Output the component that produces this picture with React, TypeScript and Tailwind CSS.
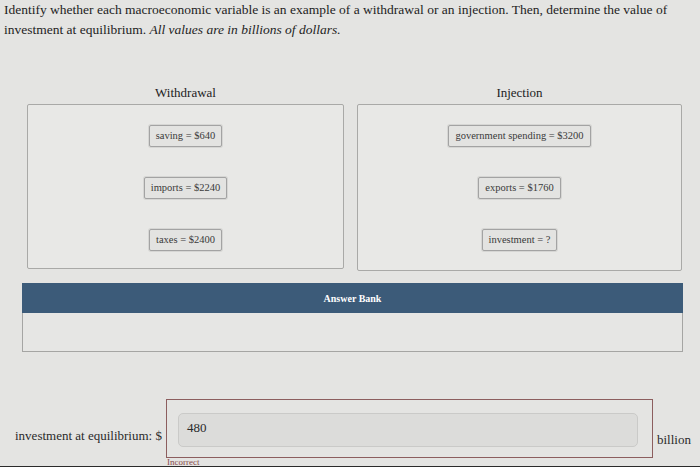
import React from "react";

const serif = { fontFamily: '"Liberation Serif", "Times New Roman", serif' };

function Chip({ children }: { children: React.ReactNode }) {
  return (
    <div className="h-[22px] px-[6px] flex items-center bg-[#e3e3e1] border border-[#a3a3a3] rounded-[2px] text-[10.5px] text-[#3a3a3a] leading-none shadow-[0_0_0_1px_#d6d6d4]">
      {children}
    </div>
  );
}

function Bucket({ title, items, heightClass }: { title: string; items: React.ReactNode[]; heightClass: string }) {
  return (
    <div className="flex flex-col items-center">
      <div className="h-[16px] text-[13px] leading-[16px] text-[#222]">{title}</div>
      <div className={`mt-[3px] w-full ${heightClass} border border-[#a9a9a7] rounded-[2px] bg-[#e8e8e6] flex flex-col items-center pt-[20px] gap-[30px]`}>
        {items.map((it, i) => (
          <Chip key={i}>{it}</Chip>
        ))}
      </div>
    </div>
  );
}

export default function App() {
  return (
    <div className="w-[700px] h-[467px] overflow-hidden bg-[#e4e4e2] relative" style={serif}>
      <div className="pl-[4px] pt-[0px] text-[13.5px] leading-[20px] text-[#1e1e1e]">
        Identify whether each macroeconomic variable is an example of a withdrawal or an injection. Then, determine the value of
        <br />
        investment at equilibrium. <i>All values are in billions of dollars.</i>
      </div>

      <div className="mt-[45px] pl-[27px] pr-[18px] grid grid-cols-[317px_325px] gap-[13px]">
        <Bucket
          title="Withdrawal"
          heightClass="h-[165px]"
          items={["saving = $640", "imports = $2240", "taxes = $2400"]}
        />
        <Bucket
          title="Injection"
          heightClass="h-[167px]"
          items={["government spending = $3200", "exports = $1760", "investment = ?"]}
        />
      </div>

      <div className="mt-[12px] ml-[22px] w-[661px]">
        <div className="h-[30px] bg-[#3c5b79] flex items-center justify-center text-white text-[10px] font-bold">
          Answer Bank
        </div>
        <div className="h-[39px] border border-t-0 border-[#a5a5a3] bg-[#e6e6e4]" />
      </div>

      <div className="mt-[47px] flex items-center">
        <div className="w-[166px] pl-[15px] text-[13px] text-[#2a2a2a] leading-none pt-[14px]">
          investment at equilibrium: $
        </div>
        <div className="w-[487px] h-[59px] border border-[#8c5e5e] pl-[11px] pt-[13px] pr-[14px] pb-[10px]">
          <div className="h-full w-full bg-[#dcdcda] border border-[#cacac8] rounded-[5px] pl-[8px] pt-[4px] text-[13px] text-[#2a2a2a]">
            480
          </div>
        </div>
        <div className="pl-[4px] pt-[22px] text-[13px] text-[#2a2a2a] leading-none">billion</div>
      </div>

      <div className="ml-[167px] mt-[0px] text-[9px] leading-[8px] text-[#8a4a4a]">Incorrect</div>
      <div className="absolute left-0 right-0 bottom-0 h-[1px] bg-[#2b2b2b]" />
    </div>
  );
}
